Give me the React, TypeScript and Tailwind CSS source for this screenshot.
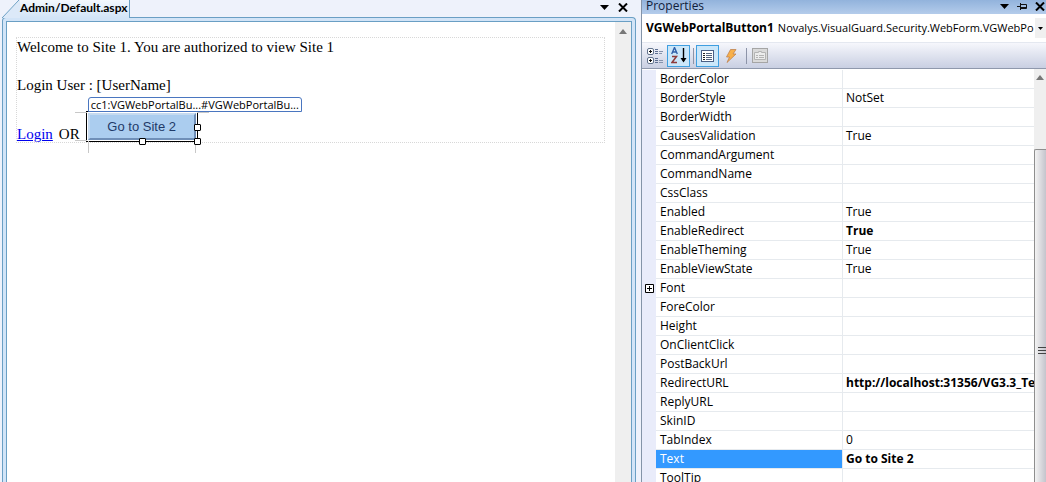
import React from 'react';
import clsx from 'clsx';

interface PropertyItem {
  name: string;
  value?: string;
  bold?: boolean;
  expandable?: boolean;
  selected?: boolean;
}

const properties: PropertyItem[] = [
  { name: 'BorderColor' },
  { name: 'BorderStyle', value: 'NotSet' },
  { name: 'BorderWidth' },
  { name: 'CausesValidation', value: 'True' },
  { name: 'CommandArgument' },
  { name: 'CommandName' },
  { name: 'CssClass' },
  { name: 'Enabled', value: 'True' },
  { name: 'EnableRedirect', value: 'True', bold: true },
  { name: 'EnableTheming', value: 'True' },
  { name: 'EnableViewState', value: 'True' },
  { name: 'Font', expandable: true },
  { name: 'ForeColor' },
  { name: 'Height' },
  { name: 'OnClientClick' },
  { name: 'PostBackUrl' },
  { name: 'RedirectURL', value: 'http://localhost:31356/VG3.3_Tes', bold: true },
  { name: 'ReplyURL' },
  { name: 'SkinID' },
  { name: 'TabIndex', value: '0' },
  { name: 'Text', value: 'Go to Site 2', bold: true, selected: true },
  { name: 'ToolTip' },
];

const ArrowDown = () => (
  <svg width="9" height="5" viewBox="0 0 9 5"><path d="M0 0h9L4.500 5z" fill="#000" /></svg>
);

const ArrowUp = () => (
  <svg width="8" height="5" viewBox="0 0 8 5"><path d="M0 5h8L4 0z" fill="#777" /></svg>
);

const CloseIcon = () => (
  <svg width="10" height="9" viewBox="0 0 10 9"><path d="M1 .5l8 8M9 .5l-8 8" stroke="#000" strokeWidth="2" /></svg>
);

const PinIcon = () => (
  <svg width="10" height="7" viewBox="0 0 10 7" fill="none" stroke="#111">
    <path d="M0 3.500h4M3.500 0v7M4 1.500h5.500v4H4M4 4.500h5" />
  </svg>
);

const CategorizedIcon = () => (
  <svg width="16" height="16" viewBox="0 0 16 16" fill="none">
    <rect x=".5" y=".5" width="6" height="6" rx="1.500" fill="#fff" stroke="#62738d" />
    <rect x=".5" y="9.500" width="6" height="6" rx="1.500" fill="#fff" stroke="#62738d" />
    <path d="M2 3.500h3M3.500 2v3M2 12.500h3M3.500 11v3" stroke="#111" />
    <path d="M8 1.500h3M8 3.500h3M8 5.500h3M8 10.500h3M8 12.500h3M8 14.500h3" stroke="#5d6f91" />
    <path d="M12 3.500h4M12 5.500h3M12 12.500h4M12 14.500h4" stroke="#8592ab" />
  </svg>
);

const SortIcon = () => (
  <svg width="16" height="17" viewBox="0 0 16 17" fill="none">
    <path d="M.7 7L3.500.5 6.300 7M1.500 5h4" stroke="#2f5fa8" strokeWidth="1.400" />
    <path d="M1 9.500h4.500L1 15.500h5" stroke="#8e3b3b" strokeWidth="1.500" />
    <path d="M12.500 1v13" stroke="#000" strokeWidth="1.400" />
    <path d="M9.500 11h6l-3 4.500z" fill="#000" />
  </svg>
);

const PropertiesIcon = () => (
  <svg width="13" height="12" viewBox="0 0 13 12" fill="none">
    <rect x=".5" y=".5" width="12" height="11" fill="#fff" stroke="#4a5f86" />
    <path d="M2 3.500h2M2 5.500h2M2 7.500h2M2 9.500h2" stroke="#222" />
    <path d="M5 3.500h6M5 5.500h6M5 7.500h6M5 9.500h6" stroke="#53637f" />
  </svg>
);

const EventsIcon = () => (
  <svg width="12" height="14" viewBox="0 0 12 14">
    <path d="M5.500 .5H11L8 5h3L2 13.500l2.500-5.500H1.500z" fill="#f8b04a" stroke="#bf8350" strokeWidth=".8" />
  </svg>
);

const PagesIcon = () => (
  <svg width="16" height="15" viewBox="0 0 16 15" fill="none" stroke="#a5a5a5">
    <rect x=".5" y=".5" width="15" height="14" fill="#dadada" />
    <path d="M2.500 4.500h4v-1h3v1h4v7h-11zM4 7.500h2M7 7.500h5M4 9.500h2M7 9.500h5" stroke="#b4b4b4" fill="#ececec" />
  </svg>
);

const Handle = ({ className }: { className: string }) => (
  <span className={clsx('absolute size-[7px] rounded-[1px] border border-black bg-white', className)} />
);

const DesignerButton = () => (
  <div className="relative border border-black p-px">
    <span className="absolute -left-3 top-0 h-px w-3 bg-[#c8c8c8]" />
    <span className="absolute -right-3 top-0 h-px w-3 bg-[#c8c8c8]" />
    <span className="absolute -left-3 bottom-0 h-px w-3 bg-[#c8c8c8]" />
    <span className="absolute left-px top-full h-3 w-px bg-[#c8c8c8]" />
    <span className="absolute right-px top-full h-3 w-px bg-[#c8c8c8]" />
    <button className="block h-[27px] w-[108px] border-2 border-[#c5daf0] border-b-[#6f8fb8] border-r-[#6f8fb8] bg-[#abcdef] font-['Liberation_Sans',sans-serif] text-[13px] leading-5 text-[#1f3a68]">
      Go to Site 2
    </button>
    <div className="absolute -top-[15px] left-px h-[15px] whitespace-nowrap rounded-t-[3px] border border-[#4a76c0] bg-white px-0.5 font-['Open_Sans',sans-serif] text-[11px] leading-[13px] text-black">
      cc1:VGWebPortalBu...#VGWebPortalBu...
    </div>
    <Handle className="-right-1 top-3" />
    <Handle className="-bottom-1 left-[52px]" />
    <Handle className="-bottom-1 -right-1" />
  </div>
);

const DocumentPane = () => (
  <section className="flex min-w-0 flex-1 flex-col bg-[#eef2fb] px-0.5">
    <header className="flex h-[17px] shrink-0 items-start justify-between">
      <div className="relative z-10 flex h-[18px]">
        <svg width="18" height="18" viewBox="0 0 18 18">
          <path d="M0 18L18 0v18z" fill="#dce9f8" />
          <path d="M0 18L17 0" stroke="#6a9fc4" fill="none" />
        </svg>
        <h1 className="h-[18px] border-r border-[#6a9fc4] bg-gradient-to-b from-[#f3f8fe] to-[#d2e4f7] pr-0.5 font-['Lato',sans-serif] text-[12px] font-bold leading-4">
          Admin/Default.aspx
        </h1>
      </div>
      <div className="flex items-center gap-[9px] pr-2 pt-[3px]">
        <button aria-label="Active files"><ArrowDown /></button>
        <button aria-label="Close document"><CloseIcon /></button>
      </div>
    </header>
    <div className="flex min-h-0 flex-1 rounded-t-[4px] border border-b-0 border-[#6a9fc4] bg-[#d2e4f7] px-[3px] pt-[3px]">
      <div className="flex min-w-0 flex-1 border border-b-0 border-[#6a9fc4] bg-white">
        <main className="min-w-0 flex-1 pl-[9px] pr-[10px] pt-[15px] font-['Liberation_Serif',serif] text-[15px] leading-[19px] text-black">
          <div className="border border-dotted border-[#d8d8d8]">
            <p>Welcome to Site 1. You are authorized to view Site 1</p>
            <p className="pt-[19px]">Login User : [UserName]</p>
            <div className="flex items-end pt-4 leading-4">
              <a href="#" className="text-[#0000ee] underline">Login</a>
              <span className="px-1.5">OR</span>
              <DesignerButton />
            </div>
          </div>
        </main>
        <div className="flex w-4 justify-center bg-[#efefef] pt-[7px]"><ArrowUp /></div>
      </div>
    </div>
  </section>
);

const PropertiesPane = () => (
  <aside className="flex w-[405px] shrink-0 flex-col border-l border-[#8494a8] bg-white">
    <header className="flex h-[14px] shrink-0 items-start justify-between bg-gradient-to-b from-[#92b3dc] to-[#b4cceb] pl-1">
      <h2 className="text-[12px] leading-[11px] text-[#10203a]">Properties</h2>
      <div className="flex h-3 items-center gap-2 pr-px">
        <button aria-label="Window position"><ArrowDown /></button>
        <button aria-label="Auto hide"><PinIcon /></button>
        <button aria-label="Close properties"><CloseIcon /></button>
      </div>
    </header>
    <div className="flex h-[29px] shrink-0 items-center border-b border-[#e4e8f0] pl-1">
      <p className="min-w-0 flex-1 overflow-hidden whitespace-nowrap text-[12px] leading-4">
        <b>VGWebPortalButton1</b>
        <span className="pl-1 text-[11px]">Novalys.VisualGuard.Security.WebForm.VGWebPo</span>
      </p>
      <button aria-label="Select object" className="flex h-5 w-[11px] items-center justify-center bg-[#f0f0f0]">
        <svg width="5" height="3" viewBox="0 0 5 3"><path d="M0 0h5L2.500 3z" /></svg>
      </button>
    </div>
    <div className="flex h-[26px] shrink-0 items-center border-b border-[#8f98ac] bg-gradient-to-b from-[#f6f7fc] to-[#c9cfe2] pl-[5px]">
      <button aria-label="Categorized"><CategorizedIcon /></button>
      <button aria-label="Alphabetical" className="ml-1 flex h-[22px] w-[23px] items-center justify-center border border-[#3f9fe0] bg-[#cbe7fa]"><SortIcon /></button>
      <span className="ml-[3px] h-4 w-px bg-[#8d94a8]" />
      <button aria-label="Properties" className="ml-[2px] flex h-[22px] w-[23px] items-center justify-center border border-[#3f9fe0] bg-[#cbe7fa]"><PropertiesIcon /></button>
      <button aria-label="Events" className="ml-1.5"><EventsIcon /></button>
      <span className="ml-[9px] h-4 w-px bg-[#8d94a8]" />
      <button aria-label="Property pages" disabled className="ml-[5px]"><PagesIcon /></button>
    </div>
    <div className="flex min-h-0 flex-1 overflow-hidden">
      <div className="min-w-0 flex-1 overflow-hidden pt-px">
        <table className="w-full table-fixed border-separate border-spacing-0 text-[12px] leading-[18px] text-black">
          <colgroup>
            <col className="w-[14px]" />
            <col className="w-[187px]" />
            <col />
          </colgroup>
          <tbody>
            {properties.map((item) => (
              <tr key={item.name} className="h-[19px]">
                <td className="bg-[#e9ecfa] p-0">
                  {item.expandable && (
                    <button aria-label={`Expand ${item.name}`} className="mx-auto block">
                      <svg width="9" height="9" viewBox="0 0 9 9">
                        <path d="M.5 .5h8v8h-8zM2 4.500h5M4.500 2v5" fill="#fff" stroke="#000" />
                      </svg>
                    </button>
                  )}
                </td>
                <th
                  scope="row"
                  className={clsx(
                    'border-b border-r border-[#e6eaee] py-0 pl-1 text-left font-normal',
                    item.selected && 'bg-[#3399ff] text-white'
                  )}
                >
                  {item.name}
                </th>
                <td
                  className={clsx(
                    'overflow-hidden whitespace-nowrap border-b border-[#e6eaee] py-0 pl-[3px]',
                    item.bold && 'font-bold'
                  )}
                >
                  {item.value}
                </td>
              </tr>
            ))}
          </tbody>
        </table>
      </div>
      <div className="flex w-3 shrink-0 flex-col bg-[#efefef]">
        <div className="flex h-20 shrink-0 justify-center pt-1.5"><ArrowUp /></div>
        <div className="flex flex-1 justify-end rounded-tl-[2px] border-l border-t border-[#8e8e8e] bg-gradient-to-r from-[#f3f3f3] to-[#c4c4cc] pt-[197px]">
          <svg width="8" height="8" viewBox="0 0 8 8"><path d="M0 .5h8M0 3.500h8M0 6.500h8" stroke="#444" /></svg>
        </div>
      </div>
    </div>
  </aside>
);

const App: React.FC = () => {
  return (
    <div className="flex h-screen overflow-hidden bg-[#d2e4f7] font-['Open_Sans',sans-serif] text-black">
      <DocumentPane />
      <div className="w-[3px] shrink-0 bg-[#eef2fb]" />
      <PropertiesPane />
    </div>
  );
};

export default App;
